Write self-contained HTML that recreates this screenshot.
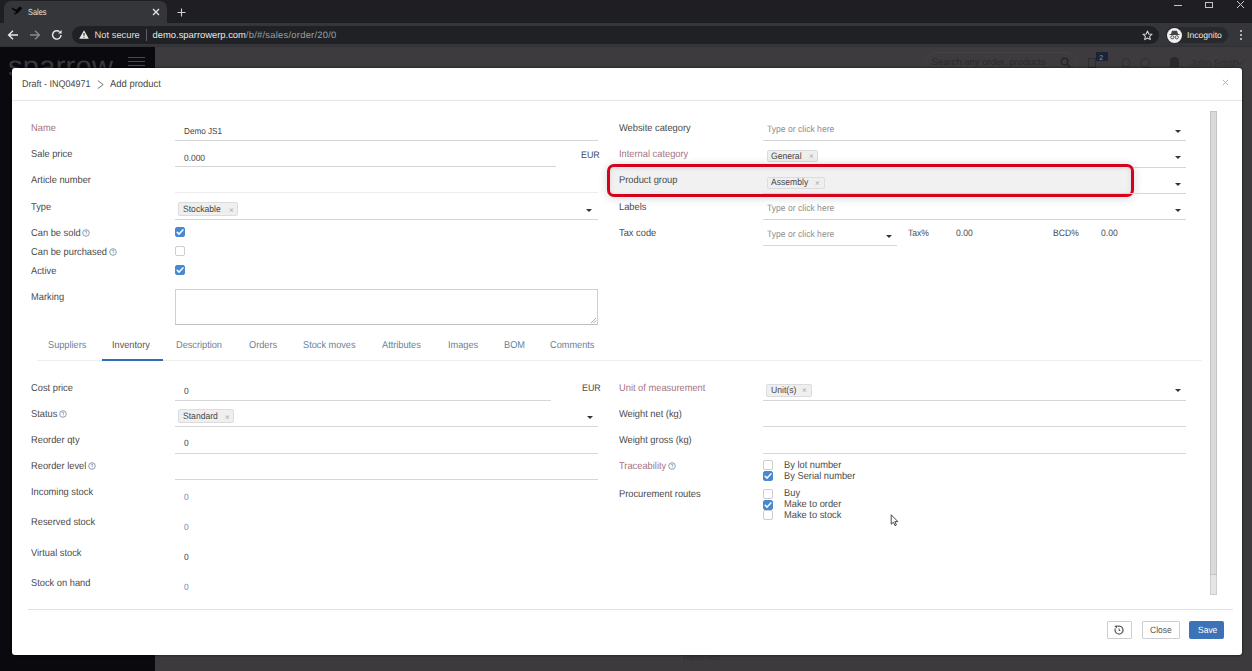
<!DOCTYPE html>
<html><head><meta charset="utf-8"><title>Sales</title>
<style>
html,body{margin:0;padding:0;}
body{width:1252px;height:671px;position:relative;overflow:hidden;background:#3c3a3d;font-family:"Liberation Sans",sans-serif;text-rendering:geometricPrecision;}
.r{position:absolute;}
.t{position:absolute;white-space:nowrap;line-height:12px;}
.chip{position:absolute;background:#efefef;border:1px solid #dcdcdc;box-sizing:border-box;border-radius:2px;}
.cb{position:absolute;width:10px;height:10px;box-sizing:border-box;border:1px solid #cdcdcd;border-radius:2px;background:#fff;}
.cb.on{background:#4a89d2;border-color:#4a89d2;}
.cb svg{position:absolute;left:-1px;top:-1px;}
</style></head><body>

<div class="r" style="left:0px;top:0px;width:1252px;height:23px;background:#1f1f23;"></div>
<div class="r" style="left:4px;top:1px;width:163px;height:29px;background:#35363a;border-radius:7px 7px 0 0;"></div>
<div class="r" style="left:0px;top:23px;width:1252px;height:24px;background:#35363a;"></div>
<div class="r" style="left:0px;top:46px;width:1252px;height:1px;background:#303035;"></div>
<svg class="r" style="left:10px;top:5px;" width="14" height="11" viewBox="0 0 14 11"><path d="M1.8 2.6 L6.4 4.8 L8.8 2.2 L10.8 1.7 L12.2 3.3 L10.6 5 L8.6 7.6 L5.2 9.6 L3.8 8.8 L6.2 6.9 L1.6 3.8 Z" fill="#070708"/></svg>
<div class="t" style="left:28.00px;top:6px;font-size:8.9px;color:#e4e4e4;transform:scaleX(0.83);transform-origin:0 0;">Sales</div>
<svg class="r" style="left:152px;top:8px;" width="8" height="8" viewBox="0 0 8 8"><path d="M1 1 L7 7 M7 1 L1 7" stroke="#e6e6e6" stroke-width="1.3"/></svg>
<svg class="r" style="left:177px;top:7.5px;" width="9" height="9" viewBox="0 0 9 9"><path d="M4.5 0.5 V8.5 M0.5 4.5 H8.5" stroke="#d0d0d0" stroke-width="1.1"/></svg>
<div class="r" style="left:1174px;top:4.5px;width:8px;height:1.0px;background:#c4c4c4;"></div>
<div class="r" style="left:1205.2px;top:2.2px;width:7.6px;height:5.8px;border:1px solid #c4c4c4;box-sizing:border-box;"></div>
<svg class="r" style="left:1235.5px;top:0px;" width="9" height="9" viewBox="0 0 9 9"><path d="M1 1 L8 8 M8 1 L1 8" stroke="#cccccc" stroke-width="1"/></svg>
<svg class="r" style="left:7px;top:29px;" width="12" height="12" viewBox="0 0 12 12"><path d="M11 6 H2 M6 1.8 L1.6 6 L6 10.2" stroke="#e8e8e8" stroke-width="1.4" fill="none"/></svg>
<svg class="r" style="left:29px;top:29px;" width="12" height="12" viewBox="0 0 12 12"><path d="M1 6 H10 M6 1.8 L10.4 6 L6 10.2" stroke="#8a8a8e" stroke-width="1.4" fill="none"/></svg>
<svg class="r" style="left:50.7px;top:29px;" width="12" height="12" viewBox="0 0 12 12"><path d="M10 6 A4.2 4.2 0 1 1 8.6 2.8" stroke="#e8e8e8" stroke-width="1.4" fill="none"/><path d="M10.6 1 V4.6 H7 Z" fill="#e8e8e8"/></svg>
<div class="r" style="left:72px;top:26px;width:1087px;height:18px;background:#202124;border-radius:9px;"></div>
<svg class="r" style="left:79px;top:30px;" width="10" height="9" viewBox="0 0 10 9"><path d="M5 0.3 L9.8 8.7 H0.2 Z" fill="#e8e8e8"/><path d="M5 3 V5.8" stroke="#202124" stroke-width="1.1"/><circle cx="5" cy="7.1" r="0.6" fill="#202124"/></svg>
<div class="t" style="left:94.50px;top:29px;font-size:9.4px;color:#dcdcdc;">Not secure</div>
<div class="r" style="left:146px;top:29px;width:1px;height:12px;background:#5f6063;"></div>
<div class="t" style="left:152.60px;top:29px;font-size:9.4px;color:#e8e8e8;">demo.sparrowerp.com<span style="color:#9aa0a6;letter-spacing:0.25px">/b/#/sales/order/20/0</span></div>
<svg class="r" style="left:1141.7px;top:29.5px;" width="11" height="11" viewBox="0 0 12 12"><path d="M6 1 L7.4 4.3 L11 4.6 L8.3 7 L9.1 10.5 L6 8.7 L2.9 10.5 L3.7 7 L1 4.6 L4.6 4.3 Z" stroke="#d8d8d8" stroke-width="1.1" fill="none" stroke-linejoin="round"/></svg>
<div class="r" style="left:1166px;top:27px;width:62px;height:16px;background:#28292c;border-radius:8px;"></div>
<div class="r" style="left:1167px;top:27.5px;width:15px;height:15px;border-radius:50%;background:#f1f1f1;"></div>
<svg class="r" style="left:1168px;top:29px;" width="13" height="12" viewBox="0 0 13 12"><path d="M3 5 L4 1.8 H9 L10 5 Z" fill="#444"/><rect x="1.5" y="5" width="10" height="1" fill="#444"/><circle cx="4.3" cy="8.3" r="1.6" stroke="#444" stroke-width="0.9" fill="none"/><circle cx="8.7" cy="8.3" r="1.6" stroke="#444" stroke-width="0.9" fill="none"/></svg>
<div class="t" style="left:1187.00px;top:29px;font-size:8.6px;color:#e8e8e8;">Incognito</div>
<div class="r" style="left:1240.3px;top:30.2px;width:1.6000000000001364px;height:1.6000000000000014px;background:#dadada;border-radius:1px;"></div>
<div class="r" style="left:1240.3px;top:34.2px;width:1.6000000000001364px;height:1.5999999999999943px;background:#dadada;border-radius:1px;"></div>
<div class="r" style="left:1240.3px;top:38.2px;width:1.6000000000001364px;height:1.5999999999999943px;background:#dadada;border-radius:1px;"></div>
<div class="r" style="left:0px;top:47px;width:155px;height:624px;background:#09090e;"></div>
<div class="t" style="left:8.00px;top:61px;font-size:29px;color:#3a393d;letter-spacing:0.3px;">sparrow</div>
<div class="r" style="left:128px;top:57px;width:17px;height:1px;background:#4a4a4e;"></div>
<div class="r" style="left:128px;top:61px;width:17px;height:1px;background:#4a4a4e;"></div>
<div class="r" style="left:128px;top:65px;width:17px;height:1px;background:#4a4a4e;"></div>
<div class="r" style="left:155px;top:47px;width:1097px;height:28px;background:#3d3b3e;"></div>
<div class="r" style="left:925px;top:52px;width:152px;height:24px;border:1px solid #424144;border-radius:12px;box-sizing:border-box;"></div>
<div class="t" style="left:931.60px;top:57px;font-size:9.5px;color:#2b2a2d;">Search any order, products</div>
<svg class="r" style="left:1060px;top:57px;" width="11" height="11" viewBox="0 0 11 11"><circle cx="4.5" cy="4.5" r="3.3" stroke="#252427" stroke-width="1.4" fill="none"/><path d="M7 7 L10 10" stroke="#252427" stroke-width="1.6"/></svg>
<div class="r" style="left:1088px;top:58px;width:8px;height:10px;border:1px solid #2e2d30;box-sizing:border-box;"></div>
<div class="r" style="left:1096px;top:52.4px;width:11.5px;height:8.800000000000004px;background:#1d2336;"></div>
<div class="t" style="left:1099.30px;top:53px;font-size:7px;color:#8a97b5;">2</div>
<div class="r" style="left:1122px;top:58px;width:8px;height:9px;border:1px solid #2e2d30;border-radius:4px 4px 1px 1px;box-sizing:border-box;"></div>
<div class="r" style="left:1140px;top:58px;width:10px;height:10px;border:1.2px solid #2e2d30;border-radius:50%;box-sizing:border-box;"></div>
<div class="r" style="left:1170px;top:57px;width:9px;height:10px;background:#2a292c;border-radius:4px 4px 1px 1px;"></div>
<div class="t" style="left:1190.40px;top:58px;font-size:9.6px;color:#302f32;">John Smith</div>
<svg class="r" style="left:1236px;top:60px;" width="8" height="6" viewBox="0 0 8 6"><path d="M1 1 L4 4.5 L7 1" stroke="#2b2a2d" stroke-width="1" fill="none"/></svg>
<div class="t" style="left:683.00px;top:651px;font-size:8.5px;color:#2e2e30;">Reserved</div>
<div class="r" style="left:11.5px;top:67.5px;width:1230.8px;height:587.2px;background:#fff;border-radius:3px;box-shadow:0 0 2px 1px rgba(0,0,0,0.35);"></div>
<div class="t" style="left:22.00px;top:79px;font-size:9.67px;color:#474747;transform:scaleX(0.930);transform-origin:0 0;">Draft - INQ04971</div>
<svg class="r" style="left:96.5px;top:79.5px;" width="8" height="10" viewBox="0 0 8 10"><path d="M0.8 0.6 L6.2 4.6 L0.8 8.6" stroke="#6a6a6a" stroke-width="0.9" fill="none"/></svg>
<div class="t" style="left:110.20px;top:79px;font-size:10.16px;color:#474747;transform:scaleX(0.930);transform-origin:0 0;">Add product</div>
<svg class="r" style="left:1222px;top:78.5px;" width="7" height="7" viewBox="0 0 7 7"><path d="M0.8 0.8 L6.2 6.2 M6.2 0.8 L0.8 6.2" stroke="#b5b5b5" stroke-width="1"/></svg>
<div class="r" style="left:12px;top:100px;width:1230px;height:1px;background:#e6e6e6;"></div>
<div class="t" style="left:31.00px;top:123px;font-size:10.0px;color:#a8737f;transform:scaleX(0.930);transform-origin:0 0;">Name</div>
<div class="t" style="left:31.00px;top:149px;font-size:10.0px;color:#4a4a4a;transform:scaleX(0.930);transform-origin:0 0;">Sale price</div>
<div class="t" style="left:31.00px;top:175px;font-size:10.0px;color:#4a4a4a;transform:scaleX(0.930);transform-origin:0 0;">Article number</div>
<div class="t" style="left:31.00px;top:202px;font-size:10.0px;color:#4a4a4a;transform:scaleX(0.930);transform-origin:0 0;">Type</div>
<div class="t" style="left:31.00px;top:228px;font-size:10.0px;color:#4a4a4a;transform:scaleX(0.930);transform-origin:0 0;">Can be sold</div>
<svg class="r" style="left:82.1px;top:229px;" width="8" height="8" viewBox="0 0 8 8"><circle cx="4" cy="4" r="3.3" stroke="#8294a8" stroke-width="0.9" fill="none"/><path d="M3 3.1 Q3 2.1 4 2.1 Q5 2.1 5 3 Q5 3.6 4.2 3.9 L4.2 4.8" stroke="#8294a8" stroke-width="0.8" fill="none"/><circle cx="4.2" cy="5.9" r="0.45" fill="#8294a8"/></svg>
<div class="t" style="left:31.00px;top:247px;font-size:10.0px;color:#4a4a4a;transform:scaleX(0.930);transform-origin:0 0;">Can be purchased</div>
<svg class="r" style="left:108.9px;top:247.8px;" width="8" height="8" viewBox="0 0 8 8"><circle cx="4" cy="4" r="3.3" stroke="#8294a8" stroke-width="0.9" fill="none"/><path d="M3 3.1 Q3 2.1 4 2.1 Q5 2.1 5 3 Q5 3.6 4.2 3.9 L4.2 4.8" stroke="#8294a8" stroke-width="0.8" fill="none"/><circle cx="4.2" cy="5.9" r="0.45" fill="#8294a8"/></svg>
<div class="t" style="left:31.00px;top:266px;font-size:10.0px;color:#4a4a4a;transform:scaleX(0.930);transform-origin:0 0;">Active</div>
<div class="t" style="left:31.00px;top:292px;font-size:10.0px;color:#4a4a4a;transform:scaleX(0.930);transform-origin:0 0;">Marking</div>
<div class="t" style="left:183.50px;top:125px;font-size:8.76px;color:#3f3f3f;transform:scaleX(0.930);transform-origin:0 0;">Demo JS1</div>
<div class="r" style="left:175px;top:140px;width:423px;height:1px;background:#d6d6d6;"></div>
<div class="t" style="left:183.50px;top:152px;font-size:9.03px;color:#3f3f3f;transform:scaleX(0.930);transform-origin:0 0;">0.000</div>
<div class="r" style="left:175px;top:166px;width:381px;height:1px;background:#d6d6d6;"></div>
<div class="t" style="left:581.00px;top:150px;font-size:9.57px;color:#4a4a4a;transform:scaleX(0.930);transform-origin:0 0;">EUR</div>
<div class="r" style="left:175px;top:192px;width:423px;height:1px;background:#ececec;"></div>
<div class="chip" style="left:178px;top:202px;width:60px;height:14px;"></div>
<div class="t" style="left:182.50px;top:203px;font-size:9.24px;color:#454545;transform:scaleX(0.930);transform-origin:0 0;">Stockable</div>
<div class="t" style="left:228.70px;top:204px;font-size:8.6px;color:#a8a8a8;transform:scaleX(0.930);transform-origin:0 0;">&#215;</div>
<div class="r" style="left:175px;top:219px;width:423px;height:1px;background:#d6d6d6;"></div>
<div class="r" style="left:586px;top:209.20000000000002px;width:0;height:0;border-left:3px solid transparent;border-right:3px solid transparent;border-top:3.4px solid #333;"></div>
<div class="cb on" style="left:175px;top:227px;"><svg width="10" height="10" viewBox="0 0 10 10"><path d="M2.2 5.2 L4.1 7.1 L7.9 2.9" stroke="#fff" stroke-width="1.5" fill="none" stroke-linecap="round" stroke-linejoin="round"/></svg></div>
<div class="cb" style="left:175px;top:245.5px;"></div>
<div class="cb on" style="left:175px;top:265px;"><svg width="10" height="10" viewBox="0 0 10 10"><path d="M2.2 5.2 L4.1 7.1 L7.9 2.9" stroke="#fff" stroke-width="1.5" fill="none" stroke-linecap="round" stroke-linejoin="round"/></svg></div>
<div class="r" style="left:175px;top:289px;width:423px;height:36px;border:1px solid #d0d0d0;border-bottom-color:#bdbdbd;box-sizing:border-box;"></div>
<svg class="r" style="left:590px;top:317px;" width="7" height="7" viewBox="0 0 7 7"><path d="M6 1 L1 6 M6 3.5 L3.5 6" stroke="#999" stroke-width="0.8"/></svg>
<div class="t" style="left:619.00px;top:123px;font-size:10.0px;color:#4a4a4a;transform:scaleX(0.930);transform-origin:0 0;">Website category</div>
<div class="t" style="left:619.00px;top:149px;font-size:10.0px;color:#a8737f;transform:scaleX(0.930);transform-origin:0 0;">Internal category</div>
<div class="t" style="left:619.00px;top:175px;font-size:10.0px;color:#4a4a4a;transform:scaleX(0.930);transform-origin:0 0;">Product group</div>
<div class="t" style="left:619.00px;top:202px;font-size:10.0px;color:#4a4a4a;transform:scaleX(0.930);transform-origin:0 0;">Labels</div>
<div class="t" style="left:619.00px;top:228px;font-size:10.0px;color:#4a4a4a;transform:scaleX(0.930);transform-origin:0 0;">Tax code</div>
<div class="t" style="left:767.30px;top:123px;font-size:9.24px;color:#8d8d8d;transform:scaleX(0.930);transform-origin:0 0;">Type or click here</div>
<div class="r" style="left:763px;top:140px;width:423px;height:1px;background:#d6d6d6;"></div>
<div class="r" style="left:1174.6px;top:130.4px;width:0;height:0;border-left:3px solid transparent;border-right:3px solid transparent;border-top:3.4px solid #333;"></div>
<div class="chip" style="left:766.6px;top:150.3px;width:51.39999999999998px;height:12.199999999999989px;"></div>
<div class="t" style="left:771.10px;top:150px;font-size:9.24px;color:#454545;transform:scaleX(0.930);transform-origin:0 0;">General</div>
<div class="t" style="left:808.70px;top:150px;font-size:8.6px;color:#a8a8a8;transform:scaleX(0.930);transform-origin:0 0;">&#215;</div>
<div class="r" style="left:763px;top:166.5px;width:423px;height:1.0px;background:#d6d6d6;"></div>
<div class="r" style="left:1174.6px;top:156.4px;width:0;height:0;border-left:3px solid transparent;border-right:3px solid transparent;border-top:3.4px solid #333;"></div>
<div class="t" style="left:767.30px;top:202px;font-size:9.24px;color:#8d8d8d;transform:scaleX(0.930);transform-origin:0 0;">Type or click here</div>
<div class="r" style="left:763px;top:219px;width:423px;height:1px;background:#d6d6d6;"></div>
<div class="r" style="left:1174.6px;top:209.20000000000002px;width:0;height:0;border-left:3px solid transparent;border-right:3px solid transparent;border-top:3.4px solid #333;"></div>
<div class="t" style="left:767.30px;top:228px;font-size:9.24px;color:#8d8d8d;transform:scaleX(0.930);transform-origin:0 0;">Type or click here</div>
<div class="r" style="left:763px;top:245px;width:134px;height:1px;background:#d6d6d6;"></div>
<div class="r" style="left:886px;top:235.4px;width:0;height:0;border-left:3px solid transparent;border-right:3px solid transparent;border-top:3.4px solid #333;"></div>
<div class="t" style="left:908.20px;top:227px;font-size:9.24px;color:#4a4a4a;transform:scaleX(0.930);transform-origin:0 0;">Tax%</div>
<div class="t" style="left:956.20px;top:227px;font-size:9.24px;color:#4a4a4a;transform:scaleX(0.930);transform-origin:0 0;">0.00</div>
<div class="t" style="left:1052.50px;top:227px;font-size:9.24px;color:#4a4a4a;transform:scaleX(0.930);transform-origin:0 0;">BCD%</div>
<div class="t" style="left:1100.80px;top:227px;font-size:9.24px;color:#4a4a4a;transform:scaleX(0.930);transform-origin:0 0;">0.00</div>
<div class="r" style="left:607px;top:164px;width:527px;height:33px;box-sizing:border-box;border:3.2px solid #d6021d;border-radius:7px;background:#f1f1f1;box-shadow:0 1px 8px 1px rgba(0,0,0,0.13), inset 0 1px 5px rgba(0,0,0,0.10);"></div>
<div class="t" style="left:619.00px;top:175px;font-size:10.0px;color:#4a4a4a;transform:scaleX(0.930);transform-origin:0 0;">Product group</div>
<div class="r" style="left:763px;top:192.5px;width:423px;height:1.0px;background:#d6d6d6;"></div>
<div class="chip" style="left:766.6px;top:176.6px;width:58.10000000000002px;height:12.599999999999994px;"></div>
<div class="t" style="left:771.10px;top:176px;font-size:9.24px;color:#454545;transform:scaleX(0.930);transform-origin:0 0;">Assembly</div>
<div class="t" style="left:815.40px;top:177px;font-size:8.6px;color:#a8a8a8;transform:scaleX(0.930);transform-origin:0 0;">&#215;</div>
<div class="r" style="left:1174.6px;top:182.9px;width:0;height:0;border-left:3px solid transparent;border-right:3px solid transparent;border-top:3.4px solid #333;"></div>
<div class="t" style="left:48.30px;top:340px;font-size:9.89px;color:#6a7f98;transform:scaleX(0.930);transform-origin:0 0;">Suppliers</div>
<div class="t" style="left:112.30px;top:340px;font-size:9.89px;color:#555;transform:scaleX(0.930);transform-origin:0 0;">Inventory</div>
<div class="t" style="left:175.80px;top:340px;font-size:9.89px;color:#6a7f98;transform:scaleX(0.930);transform-origin:0 0;">Description</div>
<div class="t" style="left:249.00px;top:340px;font-size:9.89px;color:#6a7f98;transform:scaleX(0.930);transform-origin:0 0;">Orders</div>
<div class="t" style="left:303.00px;top:340px;font-size:9.89px;color:#6a7f98;transform:scaleX(0.930);transform-origin:0 0;">Stock moves</div>
<div class="t" style="left:382.00px;top:340px;font-size:9.89px;color:#6a7f98;transform:scaleX(0.930);transform-origin:0 0;">Attributes</div>
<div class="t" style="left:447.60px;top:340px;font-size:9.89px;color:#6a7f98;transform:scaleX(0.930);transform-origin:0 0;">Images</div>
<div class="t" style="left:503.70px;top:340px;font-size:9.89px;color:#6a7f98;transform:scaleX(0.930);transform-origin:0 0;">BOM</div>
<div class="t" style="left:550.30px;top:340px;font-size:9.89px;color:#6a7f98;transform:scaleX(0.930);transform-origin:0 0;">Comments</div>
<div class="r" style="left:37px;top:360px;width:1165px;height:1px;background:#eeeeee;"></div>
<div class="r" style="left:102px;top:359px;width:61px;height:2px;background:#2f6db3;"></div>
<div class="t" style="left:31.00px;top:383px;font-size:10.0px;color:#4a4a4a;transform:scaleX(0.930);transform-origin:0 0;">Cost price</div>
<div class="t" style="left:31.00px;top:409px;font-size:10.0px;color:#4a4a4a;transform:scaleX(0.930);transform-origin:0 0;">Status</div>
<svg class="r" style="left:59px;top:410px;" width="8" height="8" viewBox="0 0 8 8"><circle cx="4" cy="4" r="3.3" stroke="#8294a8" stroke-width="0.9" fill="none"/><path d="M3 3.1 Q3 2.1 4 2.1 Q5 2.1 5 3 Q5 3.6 4.2 3.9 L4.2 4.8" stroke="#8294a8" stroke-width="0.8" fill="none"/><circle cx="4.2" cy="5.9" r="0.45" fill="#8294a8"/></svg>
<div class="t" style="left:31.00px;top:435px;font-size:10.0px;color:#4a4a4a;transform:scaleX(0.930);transform-origin:0 0;">Reorder qty</div>
<div class="t" style="left:31.00px;top:461px;font-size:10.0px;color:#4a4a4a;transform:scaleX(0.930);transform-origin:0 0;">Reorder level</div>
<svg class="r" style="left:87.5px;top:462.2px;" width="8" height="8" viewBox="0 0 8 8"><circle cx="4" cy="4" r="3.3" stroke="#8294a8" stroke-width="0.9" fill="none"/><path d="M3 3.1 Q3 2.1 4 2.1 Q5 2.1 5 3 Q5 3.6 4.2 3.9 L4.2 4.8" stroke="#8294a8" stroke-width="0.8" fill="none"/><circle cx="4.2" cy="5.9" r="0.45" fill="#8294a8"/></svg>
<div class="t" style="left:31.00px;top:487px;font-size:10.0px;color:#4a4a4a;transform:scaleX(0.930);transform-origin:0 0;">Incoming stock</div>
<div class="t" style="left:31.00px;top:517px;font-size:10.0px;color:#4a4a4a;transform:scaleX(0.930);transform-origin:0 0;">Reserved stock</div>
<div class="t" style="left:31.00px;top:548px;font-size:10.0px;color:#4a4a4a;transform:scaleX(0.930);transform-origin:0 0;">Virtual stock</div>
<div class="t" style="left:31.00px;top:578px;font-size:10.0px;color:#4a4a4a;transform:scaleX(0.930);transform-origin:0 0;">Stock on hand</div>
<div class="t" style="left:183.50px;top:385px;font-size:9.03px;color:#3f3f3f;transform:scaleX(0.930);transform-origin:0 0;">0</div>
<div class="r" style="left:175px;top:400px;width:376px;height:1px;background:#d6d6d6;"></div>
<div class="t" style="left:582.00px;top:383px;font-size:9.57px;color:#4a4a4a;transform:scaleX(0.930);transform-origin:0 0;">EUR</div>
<div class="chip" style="left:178px;top:409.4px;width:56px;height:13.600000000000023px;"></div>
<div class="t" style="left:182.50px;top:410px;font-size:9.24px;color:#454545;transform:scaleX(0.930);transform-origin:0 0;">Standard</div>
<div class="t" style="left:224.70px;top:411px;font-size:8.6px;color:#a8a8a8;transform:scaleX(0.930);transform-origin:0 0;">&#215;</div>
<div class="r" style="left:175px;top:426px;width:423px;height:1px;background:#d6d6d6;"></div>
<div class="r" style="left:586.5px;top:415.79999999999995px;width:0;height:0;border-left:3px solid transparent;border-right:3px solid transparent;border-top:3.4px solid #333;"></div>
<div class="t" style="left:183.50px;top:437px;font-size:9.03px;color:#3f3f3f;transform:scaleX(0.930);transform-origin:0 0;">0</div>
<div class="r" style="left:175px;top:452.5px;width:423px;height:1.0px;background:#d6d6d6;"></div>
<div class="r" style="left:175px;top:478.5px;width:423px;height:1.0px;background:#d6d6d6;"></div>
<div class="t" style="left:183.50px;top:491px;font-size:9.03px;color:#6d8bb0;transform:scaleX(0.930);transform-origin:0 0;">0</div>
<div class="t" style="left:183.50px;top:521px;font-size:9.03px;color:#6d8bb0;transform:scaleX(0.930);transform-origin:0 0;">0</div>
<div class="t" style="left:183.50px;top:551px;font-size:9.03px;color:#3f3f3f;transform:scaleX(0.930);transform-origin:0 0;">0</div>
<div class="t" style="left:183.50px;top:581px;font-size:9.03px;color:#6d8bb0;transform:scaleX(0.930);transform-origin:0 0;">0</div>
<div class="t" style="left:619.00px;top:383px;font-size:10.0px;color:#a8737f;transform:scaleX(0.930);transform-origin:0 0;">Unit of measurement</div>
<div class="t" style="left:619.00px;top:409px;font-size:10.0px;color:#4a4a4a;transform:scaleX(0.930);transform-origin:0 0;">Weight net (kg)</div>
<div class="t" style="left:619.00px;top:435px;font-size:10.0px;color:#4a4a4a;transform:scaleX(0.930);transform-origin:0 0;">Weight gross (kg)</div>
<div class="t" style="left:619.00px;top:461px;font-size:10.0px;color:#a8737f;transform:scaleX(0.930);transform-origin:0 0;">Traceability</div>
<svg class="r" style="left:667.5px;top:462px;" width="8" height="8" viewBox="0 0 8 8"><circle cx="4" cy="4" r="3.3" stroke="#8294a8" stroke-width="0.9" fill="none"/><path d="M3 3.1 Q3 2.1 4 2.1 Q5 2.1 5 3 Q5 3.6 4.2 3.9 L4.2 4.8" stroke="#8294a8" stroke-width="0.8" fill="none"/><circle cx="4.2" cy="5.9" r="0.45" fill="#8294a8"/></svg>
<div class="t" style="left:619.00px;top:489px;font-size:10.0px;color:#4a4a4a;transform:scaleX(0.930);transform-origin:0 0;">Procurement routes</div>
<div class="chip" style="left:766.3px;top:383.5px;width:45.40000000000009px;height:13.0px;"></div>
<div class="t" style="left:770.80px;top:384px;font-size:9.24px;color:#454545;transform:scaleX(0.930);transform-origin:0 0;">Unit(s)</div>
<div class="t" style="left:802.40px;top:384px;font-size:8.6px;color:#a8a8a8;transform:scaleX(0.930);transform-origin:0 0;">&#215;</div>
<div class="r" style="left:763px;top:399.5px;width:423px;height:1.0px;background:#d6d6d6;"></div>
<div class="r" style="left:1174.6px;top:389.4px;width:0;height:0;border-left:3px solid transparent;border-right:3px solid transparent;border-top:3.4px solid #333;"></div>
<div class="r" style="left:763px;top:426px;width:423px;height:1px;background:#d6d6d6;"></div>
<div class="r" style="left:763px;top:452.5px;width:423px;height:1.0px;background:#d6d6d6;"></div>
<div class="cb" style="left:763px;top:460px;"></div>
<div class="cb on" style="left:763px;top:471px;"><svg width="10" height="10" viewBox="0 0 10 10"><path d="M2.2 5.2 L4.1 7.1 L7.9 2.9" stroke="#fff" stroke-width="1.5" fill="none" stroke-linecap="round" stroke-linejoin="round"/></svg></div>
<div class="cb" style="left:763px;top:488.5px;"></div>
<div class="cb on" style="left:763px;top:499.5px;"><svg width="10" height="10" viewBox="0 0 10 10"><path d="M2.2 5.2 L4.1 7.1 L7.9 2.9" stroke="#fff" stroke-width="1.5" fill="none" stroke-linecap="round" stroke-linejoin="round"/></svg></div>
<div class="cb" style="left:763px;top:510.3px;"></div>
<div class="t" style="left:784.00px;top:460px;font-size:10.0px;color:#4a4a4a;transform:scaleX(0.930);transform-origin:0 0;">By lot number</div>
<div class="t" style="left:784.00px;top:471px;font-size:10.0px;color:#4a4a4a;transform:scaleX(0.930);transform-origin:0 0;">By Serial number</div>
<div class="t" style="left:784.00px;top:488px;font-size:10.0px;color:#4a4a4a;transform:scaleX(0.930);transform-origin:0 0;">Buy</div>
<div class="t" style="left:784.00px;top:499px;font-size:10.0px;color:#4a4a4a;transform:scaleX(0.930);transform-origin:0 0;">Make to order</div>
<div class="t" style="left:784.00px;top:510px;font-size:10.0px;color:#4a4a4a;transform:scaleX(0.930);transform-origin:0 0;">Make to stock</div>
<svg class="r" style="left:890px;top:514px;" width="10" height="13" viewBox="0 0 10 13"><path d="M1.2 0.8 V10.2 L3.4 8.2 L5 11.6 L6.4 11 L4.9 7.6 L7.9 7.6 Z" fill="#fff" stroke="#333" stroke-width="0.9" stroke-linejoin="round"/></svg>
<div class="r" style="left:1210px;top:111px;width:7px;height:484px;background:#e5e5e5;border:1px solid #cdcdcd;box-sizing:border-box;"></div>
<div class="r" style="left:1210px;top:111px;width:7px;height:464px;background:#dadada;border:1px solid #c3c3c3;box-sizing:border-box;"></div>
<div class="r" style="left:28px;top:609px;width:1205px;height:1px;background:#e2e2e2;"></div>
<div class="r" style="left:1107px;top:620.6px;width:25px;height:18px;border:1px solid #cfcfcf;box-sizing:border-box;border-radius:1px;"></div>
<svg class="r" style="left:1114.3px;top:625px;" width="10" height="10" viewBox="0 0 10 10"><path d="M1.4 3.4 A4 4 0 1 0 3.4 1.4" stroke="#5a5a5a" stroke-width="1.25" fill="none"/><path d="M0.3 1.0 L3.4 0.3 L2.8 3.5 Z" fill="#5a5a5a"/><path d="M4.7 2.4 L6.6 6 L4.7 6 Z" fill="#5f5f5f"/></svg>
<div class="r" style="left:1142px;top:620.6px;width:38px;height:18px;border:1px solid #cfcfcf;box-sizing:border-box;border-radius:1px;"></div>
<div class="t" style="left:1149.60px;top:624px;font-size:9.14px;color:#555;transform:scaleX(0.930);transform-origin:0 0;">Close</div>
<div class="r" style="left:1189.4px;top:621px;width:35px;height:17.6px;background:#3b72b8;border-radius:2px;"></div>
<div class="t" style="left:1197.50px;top:624px;font-size:9.14px;color:#fff;transform:scaleX(0.930);transform-origin:0 0;">Save</div>
</body></html>
